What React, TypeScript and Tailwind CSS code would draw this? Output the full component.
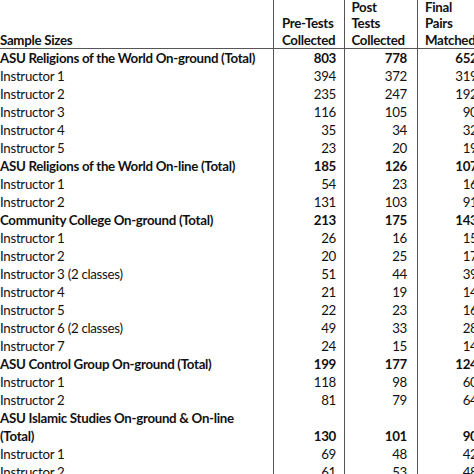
import React from "react";

type Row = { label: React.ReactNode; a: number; b: number; c: number; bold?: boolean; tall?: boolean };

const rows: Row[] = [
  { label: "ASU Religions of the World On-ground (Total)", a: 803, b: 778, c: 652, bold: true },
  { label: "Instructor 1", a: 394, b: 372, c: 319 },
  { label: "Instructor 2", a: 235, b: 247, c: 192 },
  { label: "Instructor 3", a: 116, b: 105, c: 90 },
  { label: "Instructor 4", a: 35, b: 34, c: 32 },
  { label: "Instructor 5", a: 23, b: 20, c: 19 },
  { label: "ASU Religions of the World On-line (Total)", a: 185, b: 126, c: 107, bold: true },
  { label: "Instructor 1", a: 54, b: 23, c: 16 },
  { label: "Instructor 2", a: 131, b: 103, c: 91 },
  { label: "Community College On-ground (Total)", a: 213, b: 175, c: 143, bold: true },
  { label: "Instructor 1", a: 26, b: 16, c: 15 },
  { label: "Instructor 2", a: 20, b: 25, c: 17 },
  { label: "Instructor 3 (2 classes)", a: 51, b: 44, c: 39 },
  { label: "Instructor 4", a: 21, b: 19, c: 14 },
  { label: "Instructor 5", a: 22, b: 23, c: 16 },
  { label: "Instructor 6 (2 classes)", a: 49, b: 33, c: 28 },
  { label: "Instructor 7", a: 24, b: 15, c: 14 },
  { label: "ASU Control Group On-ground (Total)", a: 199, b: 177, c: 124, bold: true },
  { label: "Instructor 1", a: 118, b: 98, c: 60 },
  { label: "Instructor 2", a: 81, b: 79, c: 64 },
  {
    label: (
      <>
        ASU Islamic Studies On-ground &amp; On-line
        <br />
        (Total)
      </>
    ),
    a: 130,
    b: 101,
    c: 90,
    bold: true,
    tall: true,
  },
  { label: "Instructor 1", a: 69, b: 48, c: 42 },
  { label: "Instructor 2", a: 61, b: 53, c: 48 },
];

export default function App() {
  return (
    <div
      className="w-[474px] h-[474px] overflow-hidden bg-white text-[#111] text-[13.3px] tracking-[-0.3px]"
      style={{ fontFamily: "Lato, 'Open Sans', sans-serif" }}
    >
      <div className="grid grid-cols-[273px_70.5px_73px_70px] w-[486.5px]">
        {/* header */}
        <div className="h-[49px] border-b-[1.5px] border-[#555] flex items-end font-bold leading-[16.5px]">
          Sample Sizes
        </div>
        <div className="h-[49px] border-b-[1.5px] border-l border-[#555] flex items-end pl-[8px] font-bold leading-[16.5px]">
          <div>
            Pre-Tests
            <br />
            Collected
          </div>
        </div>
        <div className="h-[49px] border-b-[1.5px] border-l border-[#555] flex items-end pl-[7px] font-bold leading-[16.5px]">
          <div>
            Post
            <br />
            Tests
            <br />
            Collected
          </div>
        </div>
        <div className="h-[49px] border-b-[1.5px] border-l border-[#555] flex items-end pl-[7.5px] font-bold leading-[16.5px]">
          <div>
            Final
            <br />
            Pairs
            <br />
            Matched
          </div>
        </div>

        {rows.map((r, i) => {
          const h = r.tall ? "h-[36px]" : "h-[18px]";
          const w = r.bold ? "font-bold" : "font-normal";
          return (
            <React.Fragment key={i}>
              <div className={`${h} ${w} leading-[18px] whitespace-nowrap`}>{r.label}</div>
              <div className={`${h} ${w} leading-[18px] border-l border-[#555] flex items-end justify-end pr-[7.5px]`}>{r.a}</div>
              <div className={`${h} ${w} leading-[18px] border-l border-[#555] flex items-end justify-end pr-[9.5px]`}>{r.b}</div>
              <div className={`${h} ${w} leading-[18px] border-l border-[#555] flex items-end justify-end pr-[9px]`}>{r.c}</div>
            </React.Fragment>
          );
        })}
      </div>
    </div>
  );
}
